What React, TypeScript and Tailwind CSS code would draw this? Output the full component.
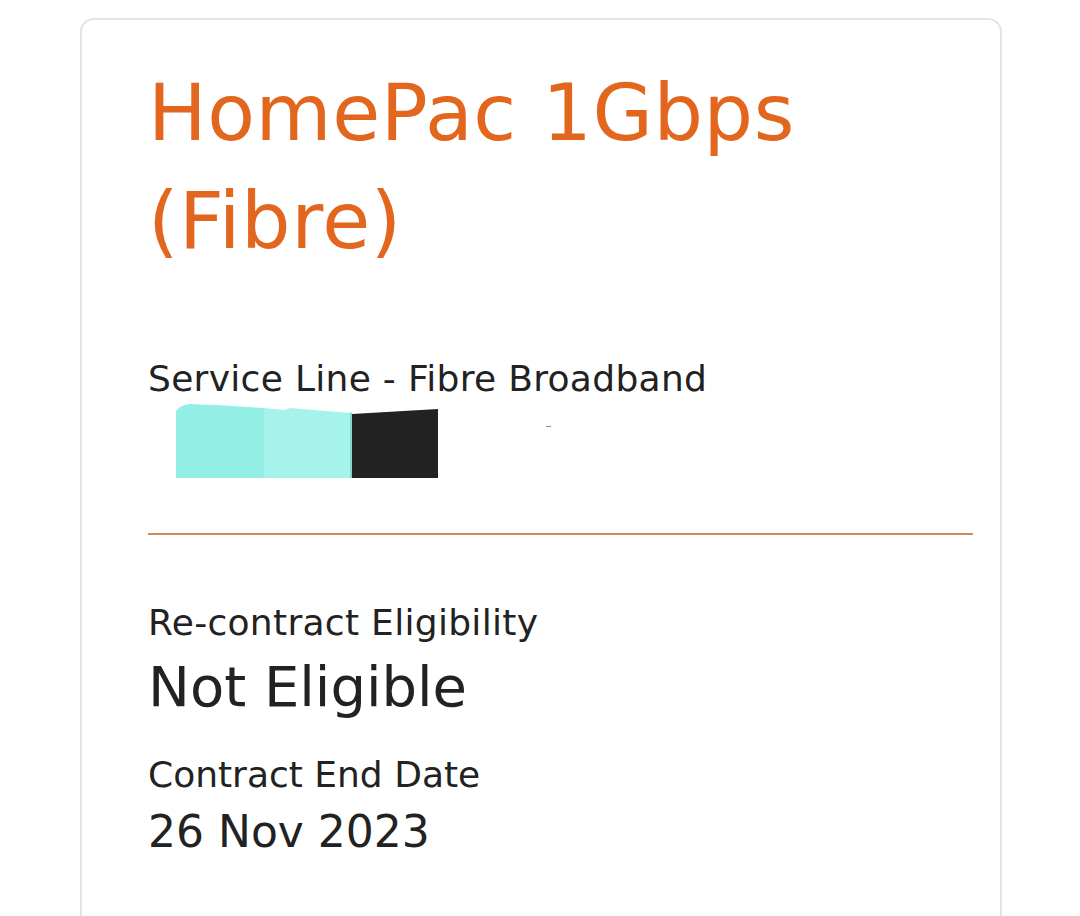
export default function App() {
  return (
    <div
      className="h-[916px] overflow-hidden bg-white pt-[18px]"
      style={{ fontFamily: '"DejaVu Sans", sans-serif' }}
    >
      <div className="ml-[80px] w-[922px] h-[960px] rounded-[14px] border-2 border-[#e4e4e4] bg-white pl-[66px] pr-[27px] pt-[39px] text-[#222222]">
        {/* 套餐名称 */}
        <h1 className="text-[78px] leading-[108px] tracking-[0.6px] text-[#e2661e] font-normal">
          HomePac 1Gbps
          <br />
          (Fibre)
        </h1>

        <div className="mt-[82px] text-[36px] leading-[44px] tracking-[0.3px]">Service Line - Fibre Broadband</div>

        {/* 遮挡的号码 */}
        <div className="flex items-start">
          <svg className="ml-[28px]" width="264" height="78" viewBox="0 0 264 78">
            <path d="M0 10 Q4 4 14 3 L40 4 L88 7 L88 77 L0 77 Z" fill="#93efe5" />
            <path d="M88 7 L108 9 L114 7 L150 10 L176 12 L176 77 L88 77 Z" fill="#a6f3eb" />
            <path d="M174 11 L176 12 L176 77 L174 77 Z" fill="#7fd7ce" />
            <path d="M176 13 L262 8 L262 77 L176 77 Z" fill="#222222" />
          </svg>
          <div className="ml-[106px] mt-[25px] h-[1px] w-[5px] bg-[#8a8a8a]" />
        </div>

        <div className="mt-[54px] h-[2px] bg-[#cf8a5c]" />

        <div className="mt-[66px] text-[36px] leading-[44px] tracking-[0.3px]">Re-contract Eligibility</div>
        <div className="mt-[10px] text-[56px] leading-[64px]">Not Eligible</div>

        <div className="mt-[34px] text-[36px] leading-[44px]">Contract End Date</div>
        <div className="mt-[9px] text-[44px] leading-[52px]">26 Nov 2023</div>
      </div>
    </div>
  )
}
